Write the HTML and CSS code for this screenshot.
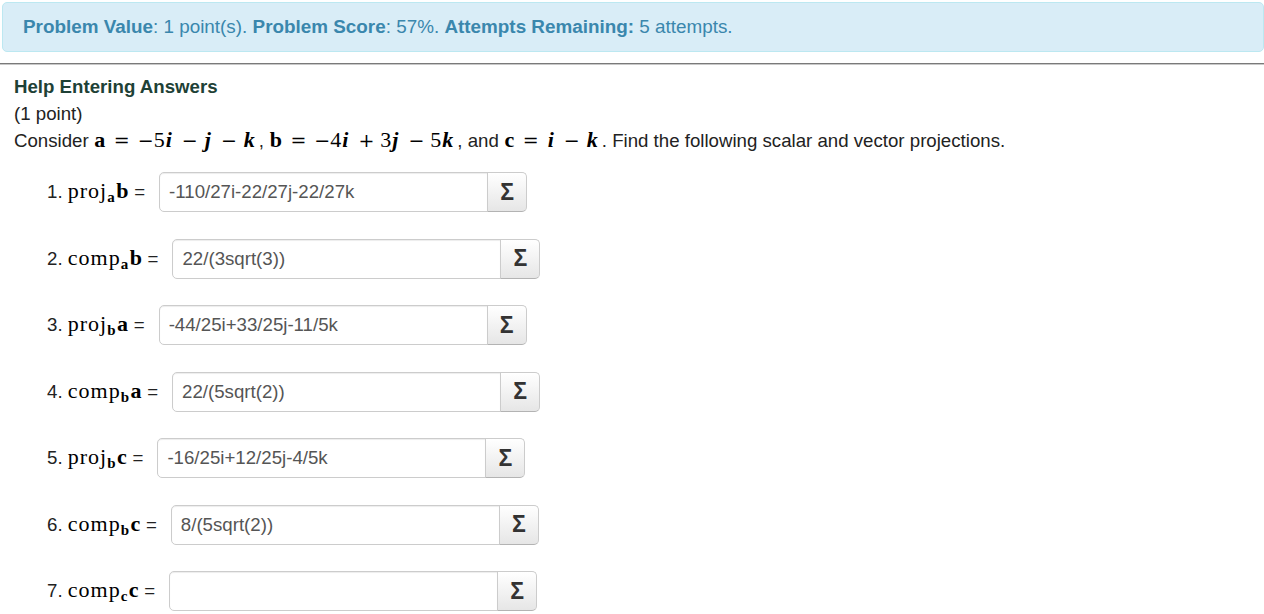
FILE: index.html
```html
<!DOCTYPE html>
<html lang="en">
<head>
    <meta charset="UTF-8">
    <meta name="viewport" content="width=device-width, initial-scale=1.0">
    <title>Help Entering Answers</title>
    <link rel="stylesheet" href="styles.css">
</head>
<body>
    <div class="alert">
        <strong>Problem Value</strong>: 1 point(s). <strong>Problem Score</strong>: 57%. <strong>Attempts Remaining:</strong> 5 attempts.
    </div>
    <hr class="rule">

    <div class="problem">
        <h3 class="problem-title">Help Entering Answers</h3>
        <div>(1 point)</div>
        <div>Consider <span class="math"><b>a</b><span class="rel">=</span><span class="op">&minus;</span>5<i>i</i><span class="bin">&minus;</span><i>j</i><span class="bin">&minus;</span><i>k</i></span>, <span class="math"><b>b</b><span class="rel">=</span><span class="op">&minus;</span>4<i>i</i><span class="bin">+</span>3<i>j</i><span class="bin">&minus;</span>5<i>k</i></span>, and <span class="math"><b>c</b><span class="rel">=</span><i>i</i><span class="bin">&minus;</span><i>k</i></span>. Find the following scalar and vector projections.</div>

        <div class="answers">
            <div class="answer-row">
                <span class="label">1. <span class="math"><span class="fn">proj</span><sub>a</sub><b>b</b></span> =</span>
                <div class="input-group"><input type="text" value="-110/27i-22/27j-22/27k"><button>&Sigma;</button></div>
            </div>
            <div class="answer-row">
                <span class="label">2. <span class="math"><span class="fn">comp</span><sub>a</sub><b>b</b></span> =</span>
                <div class="input-group"><input type="text" value="22/(3sqrt(3))"><button>&Sigma;</button></div>
            </div>
            <div class="answer-row">
                <span class="label">3. <span class="math"><span class="fn">proj</span><sub>b</sub><b>a</b></span> =</span>
                <div class="input-group"><input type="text" value="-44/25i+33/25j-11/5k"><button>&Sigma;</button></div>
            </div>
            <div class="answer-row">
                <span class="label">4. <span class="math"><span class="fn">comp</span><sub>b</sub><b>a</b></span> =</span>
                <div class="input-group"><input type="text" value="22/(5sqrt(2))"><button>&Sigma;</button></div>
            </div>
            <div class="answer-row">
                <span class="label">5. <span class="math"><span class="fn">proj</span><sub>b</sub><b>c</b></span> =</span>
                <div class="input-group"><input type="text" value="-16/25i+12/25j-4/5k"><button>&Sigma;</button></div>
            </div>
            <div class="answer-row">
                <span class="label">6. <span class="math"><span class="fn">comp</span><sub>b</sub><b>c</b></span> =</span>
                <div class="input-group"><input type="text" value="8/(5sqrt(2))"><button>&Sigma;</button></div>
            </div>
            <div class="answer-row">
                <span class="label">7. <span class="math"><span class="fn">comp</span><sub>c</sub><b>c</b></span> =</span>
                <div class="input-group"><input type="text" value=""><button>&Sigma;</button></div>
            </div>
        </div>
    </div>
</body>
</html>
```

FILE: styles.css
```css
body {
    margin: 0;
    font-family: "Liberation Sans", Arial, sans-serif;
    font-size: 18.67px;
    line-height: 26.67px;
    color: #222;
}
.alert {
    margin: 2px 0 0 2px;
    padding: 10.67px 20px;
    background: #d9edf7;
    border: 1px solid #bce8f1;
    border-radius: 5px;
    color: #3a87ad;
    font-size: 18.88px;
}
.rule {
    margin: 11px 0 0;
    height: 0;
    border: none;
    border-top: 1px solid #7a7a7a;
    border-bottom: 1px solid #c8c8c8;
}
.problem {
    padding: 9px 14px 0;
}
.problem-title {
    margin: 0;
    font-size: 18.67px;
    line-height: 26.67px;
    color: #1e4136;
}

/* typeset math: serif letters, wide operators */
.math {
    font-family: "Liberation Serif", "Times New Roman", serif;
    font-size: 22px;
    color: #000;
}
.math b {
    padding: 0 0.5px;
}
.math i {
    font-weight: bold;
    padding: 0 4px 0 1px;
}
.math .fn {
    letter-spacing: 1px;
}
.math .rel,
.math .bin,
.math .op {
    font-family: "DejaVu Serif", serif;
    font-size: 19px;
}
.math .rel {
    margin: 0 8px;
}
.math .bin {
    margin: 0 6px;
}
.math sub {
    font-weight: bold;
    font-size: 15px;
    vertical-align: -4px;
    line-height: 0;
    margin: 0 1px 0 0;
}

.answers {
    padding: 17px 0 0 33px;
    display: flex;
    flex-direction: column;
    gap: 26.5px;
}
.answer-row {
    display: flex;
    align-items: center;
    height: 40px;
}
.label {
    white-space: pre;
    margin-right: 14px;
}
.input-group {
    display: flex;
    height: 40px;
}
.input-group input {
    width: 329px;
    height: 40px;
    box-sizing: border-box;
    padding: 5px 9px;
    font-family: "Liberation Sans", Arial, sans-serif;
    font-size: 18.67px;
    color: #555;
    border: 1px solid #ccc;
    border-radius: 5px 0 0 5px;
    box-shadow: inset 0 1px 1px rgba(0, 0, 0, 0.075);
    outline: none;
}
.input-group button {
    width: 40px;
    height: 40px;
    padding: 0;
    margin-left: -1px;
    font-family: "Liberation Sans", Arial, sans-serif;
    font-size: 23px;
    font-weight: bold;
    color: #333;
    background: linear-gradient(#ffffff, #e6e6e6);
    border: 1px solid #ccc;
    border-bottom-color: #b3b3b3;
    border-radius: 0 5px 5px 0;
}
```
